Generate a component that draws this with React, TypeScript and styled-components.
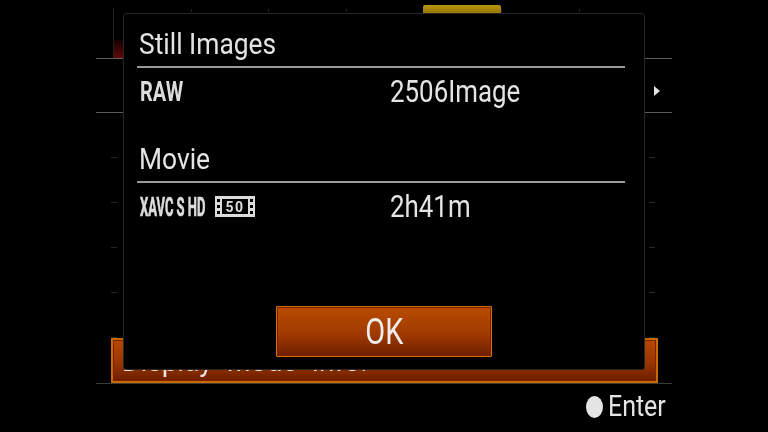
import React from "react";
import styled, { createGlobalStyle } from "styled-components";

const GlobalStyle = createGlobalStyle`
    html, body {
        margin: 0;
        background: #000;
        font-family: "Roboto", "Liberation Sans", sans-serif;
    }
`;

const Stage = styled.div`
    position: relative;
    width: 768px;
    height: 432px;
    overflow: hidden;
    background: #000;
    color: #e4e4e4;
    filter: blur(0.35px);
`;

/* the menu page behind the dialog */
const Menu = styled.div`
    width: 576px;
    margin: 0 auto;
    display: flex;
    flex-direction: column;
`;

const TabBar = styled.div`
    height: 58px;
    padding-left: 17px;
    display: flex;
    border-bottom: 1px solid #5a5a5a;
`;

const Tab = styled.div<{ $active?: boolean; $red?: boolean }>`
    position: relative;
    width: 77.6px;
    height: 58px;
    &::before {
        content: "";
        position: absolute;
        left: 0;
        top: ${(p) => (p.$red ? "8px" : "9px")};
        width: 1px;
        height: ${(p) => (p.$red ? "50px" : "3px")};
        background: #222;
    }
    ${(p) =>
        p.$red &&
        `&::after {
            content: "";
            position: absolute;
            left: 1px;
            top: 40px;
            width: 10px;
            height: 18px;
            background: linear-gradient(#120000, #640808);
        }`}
    ${(p) =>
        p.$active &&
        `&::after {
            content: "";
            position: absolute;
            left: 0;
            top: 5px;
            width: 78px;
            height: 9px;
            border-radius: 2px 2px 0 0;
            background: linear-gradient(#b8950e, #94740a);
        }`}
`;

const PageRow = styled.div`
    box-sizing: border-box;
    height: 54px;
    display: flex;
    align-items: center;
    justify-content: flex-end;
    padding: 10px 12px 0 0;
    border-bottom: 1px solid #5a5a5a;
`;

const Arrow = styled.div`
    width: 0;
    height: 0;
    border-left: 6px solid #e4e4e4;
    border-top: 5px solid transparent;
    border-bottom: 5px solid transparent;
`;

const Row = styled.div`
    position: relative;
    height: 45px;
    &::before,
    &::after {
        content: "";
        position: absolute;
        bottom: 0;
        width: 6px;
        height: 1px;
        background: #282828;
    }
    &::before {
        left: 15px;
    }
    &::after {
        right: 17px;
    }
`;

const SelectedRow = styled.div`
    box-sizing: border-box;
    height: 45px;
    margin: 0 14px 0 15px;
    padding: 5px 0 0 9px;
    overflow: hidden;
    border: 2px solid #c96a00;
    background: linear-gradient(#b84800, #983600 55%, #6e1e00);
    box-shadow: inset 0 0 0 1px #7c2000;
    font-size: 28px;
    line-height: 34px;
    word-spacing: 7px;
    white-space: nowrap;
`;

const Footer = styled.div`
    border-top: 1px solid #3a3a3a;
    display: flex;
    justify-content: flex-end;
    align-items: center;
    gap: 5px;
    height: 45px;
    padding-right: 7px;
`;

const EnterDot = styled.span`
    width: 17px;
    height: 22px;
    border-radius: 50%;
    background: #e4e4e4;
`;

const EnterLabel = styled.span`
    font-size: 29px;
    line-height: 45px;
    display: inline-block;
    width: 57px;
    transform: scaleX(0.86);
    transform-origin: left center;
`;

/* dialog on top of the menu */
const Dialog = styled.div`
    position: absolute;
    left: 123px;
    top: 13px;
    box-sizing: border-box;
    width: 522px;
    height: 357px;
    padding: 13px 19px 0 13px;
    display: flex;
    flex-direction: column;
    background: #000;
    border: 1px solid #262626;
    border-radius: 3px;
`;

const SectionTitle = styled.div`
    height: 39px;
    padding-left: 2px;
    font-size: 29px;
    line-height: 34px;
    border-bottom: 2px solid #9a9a9a;
    white-space: nowrap;
    & > span {
        display: inline-block;
        transform: scaleX(0.91);
        transform-origin: left center;
    }
`;

const InfoRow = styled.div`
    box-sizing: border-box;
    height: 51px;
    padding-bottom: 4px;
    display: grid;
    grid-template-columns: 253px 1fr;
    align-items: center;
`;

const Format = styled.div`
    display: flex;
    align-items: center;
    padding-left: 3px;
    font-weight: 700;
    color: #dcdcdc;
    white-space: nowrap;
`;

const FormatText = styled.span<{ $w: number; $sx: number; $size: number; $heavy?: boolean }>`
    display: inline-block;
    width: ${(p) => p.$w}px;
    font-size: ${(p) => p.$size}px;
    -webkit-text-stroke: ${(p) => (p.$heavy ? "0.7px #dcdcdc" : "0")};
    transform: scaleX(${(p) => p.$sx});
    transform-origin: left center;
`;

const Value = styled.div`
    font-size: 31px;
    white-space: nowrap;
    & > span {
        display: inline-block;
        transform: scaleX(0.835);
        transform-origin: left center;
    }
`;

const Gap = styled.div`
    height: 23px;
`;

const DialogActions = styled.div`
    margin-top: auto;
    margin-bottom: 12px;
    padding-left: 139px;
    display: flex;
`;

const OkButton = styled.button`
    width: 216px;
    height: 51px;
    padding: 0;
    border: 1px solid #d07000;
    border-radius: 1px;
    box-shadow: inset 0 0 0 1px #7c1e00;
    background: linear-gradient(#b84c00, #a03a00 55%, #6e1e00);
    color: #ececec;
    font-family: inherit;
    font-size: 37px;
    line-height: 48px;
    & > span {
        display: inline-block;
        transform: scaleX(0.78);
    }
`;

const FilmIcon = () => (
    <svg width="40" height="21" viewBox="0 0 40 21">
        <rect x="0" y="0" width="40" height="21" fill="#dcdcdc" />
        <rect x="7" y="3" width="26" height="15" fill="#000" />
        {[3, 9, 15].map((y) => (
            <React.Fragment key={y}>
                <rect x="2" y={y} width="3" height="3" fill="#000" />
                <rect x="35" y={y} width="3" height="3" fill="#000" />
            </React.Fragment>
        ))}
        <text
            x="20"
            y="15.5"
            textAnchor="middle"
            fontFamily="Roboto, sans-serif"
            fontWeight="700"
            fontSize="14"
            letterSpacing="1.5"
            fill="#dcdcdc"
        >
            50
        </text>
    </svg>
);

export default function App() {
    return (
        <Stage>
            <GlobalStyle />
            <Menu>
                <TabBar>
                    <Tab $red />
                    <Tab />
                    <Tab />
                    <Tab />
                    <Tab $active />
                    <Tab />
                    <Tab />
                </TabBar>
                <PageRow>
                    <Arrow />
                </PageRow>
                <Row />
                <Row />
                <Row />
                <Row />
                <Row />
                <SelectedRow>Display Mode Info.</SelectedRow>
                <Footer>
                    <EnterDot />
                    <EnterLabel>Enter</EnterLabel>
                </Footer>
            </Menu>
            <Dialog>
                <SectionTitle>
                    <span>Still Images</span>
                </SectionTitle>
                <InfoRow>
                    <Format>
                        <FormatText $w={60} $sx={0.74} $size={27}>RAW</FormatText>
                    </Format>
                    <Value>
                        <span>2506Image</span>
                    </Value>
                </InfoRow>
                <Gap />
                <SectionTitle>
                    <span>Movie</span>
                </SectionTitle>
                <InfoRow>
                    <Format>
                        <FormatText $w={75} $sx={0.5} $size={26} $heavy>XAVC S HD</FormatText>
                        <FilmIcon />
                    </Format>
                    <Value>
                        <span>2h41m</span>
                    </Value>
                </InfoRow>
                <DialogActions>
                    <OkButton>
                        <span>OK</span>
                    </OkButton>
                </DialogActions>
            </Dialog>
        </Stage>
    );
}
